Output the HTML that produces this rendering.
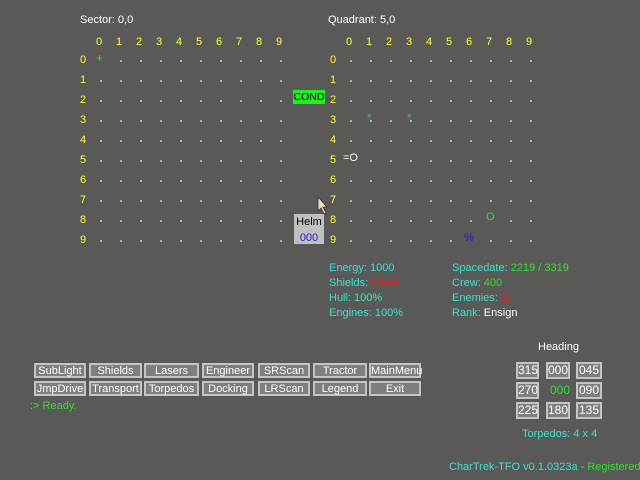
<!DOCTYPE html>
<html><head><meta charset="utf-8"><style>
body{margin:0;width:640px;height:480px;background:#595957;position:relative;overflow:hidden;font-family:"Liberation Sans",sans-serif;font-size:11px;}
.t{position:absolute;white-space:nowrap;line-height:12px;}
.y{color:#ffff40}.w{color:#fff}.c{color:#40e0d0}.g{color:#30e030}.r{color:#e02020}
.dots{position:absolute;background-image:radial-gradient(circle at 1px 1px,#d8d8d8 0.7px,transparent 1.1px);background-size:20px 20px;}
.b{position:absolute;box-sizing:border-box;border:2px solid #c4c4c4;background:#7e7e7e;color:#fff;text-align:center;font-size:11px;line-height:12px;}
.row{position:absolute;display:flex;}
.row span{width:20px;text-align:center;color:#ffff40;line-height:12px}
.col{position:absolute;width:12px;text-align:center;color:#ffff40;}
.col span{display:block;height:20px;line-height:12px}
</style></head><body>
<div class="t w" style="left:80px;top:14px">Sector: 0,0</div>
<div class="t w" style="left:328px;top:14px">Quadrant: 5,0</div>
<div class="row" style="left:89px;top:36px"><span>0</span><span>1</span><span>2</span><span>3</span><span>4</span><span>5</span><span>6</span><span>7</span><span>8</span><span>9</span></div>
<div class="row" style="left:339px;top:36px"><span>0</span><span>1</span><span>2</span><span>3</span><span>4</span><span>5</span><span>6</span><span>7</span><span>8</span><span>9</span></div>
<div class="col" style="left:77px;top:54px"><span>0</span><span>1</span><span>2</span><span>3</span><span>4</span><span>5</span><span>6</span><span>7</span><span>8</span><span>9</span></div>
<div class="col" style="left:327px;top:54px"><span>0</span><span>1</span><span>2</span><span>3</span><span>4</span><span>5</span><span>6</span><span>7</span><span>8</span><span>9</span></div>
<div class="dots" style="left:100px;top:60px;width:200px;height:200px"></div>
<div class="dots" style="left:350px;top:60px;width:200px;height:200px"></div>
<div style="position:absolute;left:96px;top:52px;width:8px;height:10px;background:#595957"></div>
<div class="t g" style="left:96px;top:52px;font-size:12px">+</div>
<div class="t" style="left:367px;top:112px;color:#30c0c0">*</div>
<div class="t" style="left:407px;top:112px;color:#30c0c0">*</div>
<div style="position:absolute;left:340px;top:150px;width:18px;height:14px;background:#595957"></div>
<div class="t w" style="left:343px;top:152px">=O</div>
<div style="position:absolute;left:484px;top:210px;width:10px;height:14px;background:#595957"></div>
<div class="t g" style="left:486px;top:211px">O</div>
<div style="position:absolute;left:462px;top:230px;width:14px;height:14px;background:#595957"></div>
<div class="t" style="left:464px;top:232px;color:#2020d0">%</div>
<div class="t" style="left:293px;top:90px;width:32px;height:14px;background:#20f020;color:#000;line-height:14px;text-align:center;font-size:10.5px">COND</div>
<div style="position:absolute;left:294px;top:214px;width:30px;height:30px;background:#c0c0c0"></div>
<div class="t" style="left:294px;top:216px;width:30px;text-align:center;color:#000">Helm</div>
<div class="t" style="left:294px;top:232px;width:30px;text-align:center;color:#2020d0">000</div>
<svg style="position:absolute;left:317px;top:196px" width="12" height="20"><path d="M1 1 L1 15 L4 12 L7 18 L9 17 L6 11 L10 11 Z" fill="#e8e0c0" stroke="#333" stroke-width="0.8"/></svg>
<div class="t c" style="left:329px;top:261px;line-height:15px">Energy: 1000<br>Shields: <span class="r">Down</span><br>Hull: 100%<br>Engines: 100%</div>
<div class="t c" style="left:452px;top:261px;line-height:15px">Spacedate: <span class="g">2219 / 3319</span><br>Crew: <span class="g">400</span><br>Enemies: <span class="r">11</span><br>Rank: <span class="w">Ensign</span></div>
<div class="b" style="left:34px;top:363px;width:52px;height:15px">SubLight</div>
<div class="b" style="left:89px;top:363px;width:53px;height:15px">Shields</div>
<div class="b" style="left:144px;top:363px;width:55px;height:15px">Lasers</div>
<div class="b" style="left:202px;top:363px;width:52px;height:15px">Engineer</div>
<div class="b" style="left:258px;top:363px;width:52px;height:15px">SRScan</div>
<div class="b" style="left:313px;top:363px;width:54px;height:15px">Tractor</div>
<div class="b" style="left:369px;top:363px;width:52px;height:15px">MainMenu</div>
<div class="b" style="left:34px;top:381px;width:52px;height:15px">JmpDrive</div>
<div class="b" style="left:89px;top:381px;width:53px;height:15px">Transport</div>
<div class="b" style="left:144px;top:381px;width:55px;height:15px">Torpedos</div>
<div class="b" style="left:202px;top:381px;width:52px;height:15px">Docking</div>
<div class="b" style="left:258px;top:381px;width:52px;height:15px">LRScan</div>
<div class="b" style="left:313px;top:381px;width:54px;height:15px">Legend</div>
<div class="b" style="left:369px;top:381px;width:52px;height:15px">Exit</div>
<div class="t g" style="left:30px;top:400px">:&gt; Ready.</div>
<div class="t w" style="left:538px;top:341px">Heading</div>
<div class="b" style="left:516px;top:362px;width:23px;height:17px;line-height:13px;font-size:12px">315</div>
<div class="b" style="left:546px;top:362px;width:24px;height:17px;line-height:13px;font-size:12px">000</div>
<div class="b" style="left:576px;top:362px;width:26px;height:17px;line-height:13px;font-size:12px">045</div>
<div class="b" style="left:516px;top:382px;width:23px;height:17px;line-height:13px;font-size:12px">270</div>
<div class="t g" style="left:550px;top:384px;font-size:12px">000</div>
<div class="b" style="left:576px;top:382px;width:26px;height:17px;line-height:13px;font-size:12px">090</div>
<div class="b" style="left:516px;top:402px;width:23px;height:17px;line-height:13px;font-size:12px">225</div>
<div class="b" style="left:546px;top:402px;width:24px;height:17px;line-height:13px;font-size:12px">180</div>
<div class="b" style="left:576px;top:402px;width:26px;height:17px;line-height:13px;font-size:12px">135</div>
<div class="t c" style="left:522px;top:428px">Torpedos: 4 x 4</div>
<div class="t c" style="left:449px;top:461px">CharTrek-TFO v0.1.0323a - <span class="g">Registered</span></div>
</body></html>
